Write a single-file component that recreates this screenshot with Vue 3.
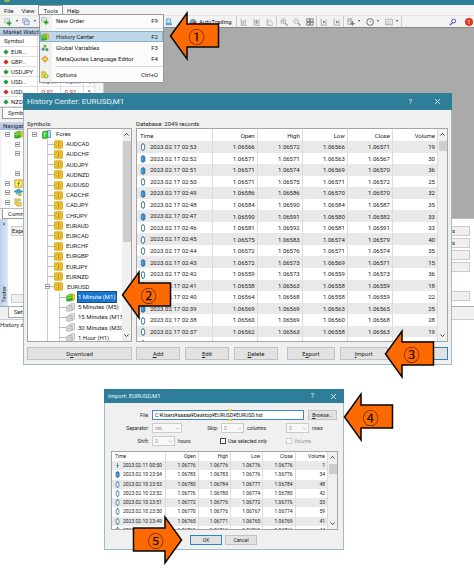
<script setup>
import { ref } from 'vue'

const menus = ['File', 'View', 'Tools', 'Help']
const tools = [
  { icon: 'add', label: 'New Order', key: 'F9', end: true },
  { icon: 'db', label: 'History Center', key: 'F2', active: true },
  { icon: 'dots', label: 'Global Variables', key: 'F3' },
  { icon: 'gem', label: 'MetaQuotes Language Editor', key: 'F4', end: true },
  { icon: 'gear', label: 'Options', key: 'Ctrl+O' }
]
const watch = [
  ['up', 'EUR...', '1.06...', '1.06...', '9'],
  ['down', 'GBP...', '1.19...', '1.19...', '12'],
  ['up', 'USDJPY', '134....', '134....', '10'],
  ['up', 'USD...', '1.34...', '1.34...', '4'],
  ['down', 'USD...', '0.92...', '0.92...', '5'],
  ['up', 'NZD...', '', '', '']
]
const navigator = [
  { icon: 'db', depth: 0, box: true },
  { depth: 1, box: true },
  { depth: 1, box: true },
  { depth: 1 },
  { depth: 1, box: true },
  { icon: 'fn', depth: 0, box: true },
  { icon: 'cap', depth: 0, box: true },
  { icon: 'script', depth: 0, box: true }
]
const symbols = ['AUDCAD', 'AUDCHF', 'AUDJPY', 'AUDNZD', 'AUDUSD', 'CADCHF', 'CADJPY', 'CHFJPY', 'EURAUD', 'EURCAD', 'EURCHF', 'EURGBP', 'EURJPY', 'EURNZD', 'EURUSD']
const frames = ['1 Minute (M1)', '5 Minutes (M5)', '15 Minutes (M15', '30 Minutes (M30', '1 Hour (H1)']
const tree = [
  { icon: 'forex', label: 'Forex', depth: 0, box: true },
  ...symbols.map(s => ({ icon: 'coin', label: s, depth: 1, box: s === 'EURUSD' })),
  ...frames.map((f, i) => ({ icon: i ? 'dbgray' : 'db', label: f, depth: 2, selected: i === 0 }))
]
const heads = ['Time', 'Open', 'High', 'Low', 'Close', 'Volume']
const records = [
  [0, '2023.02.17 02:53', '1.06566', '1.06572', '1.06566', '1.06571', 19],
  [1, '2023.02.17 02:52', '1.06571', '1.06571', '1.06563', '1.06567', 30],
  [1, '2023.02.17 02:51', '1.06571', '1.06574', '1.06569', '1.06570', 36],
  [0, '2023.02.17 02:50', '1.06571', '1.06575', '1.06571', '1.06572', 25],
  [1, '2023.02.17 02:49', '1.06586', '1.06586', '1.06570', '1.06570', 32],
  [0, '2023.02.17 02:48', '1.06584', '1.06590', '1.06584', '1.06587', 35],
  [1, '2023.02.17 02:47', '1.06590', '1.06591', '1.06580', '1.06582', 33],
  [0, '2023.02.17 02:46', '1.06581', '1.06592', '1.06581', '1.06591', 33],
  [0, '2023.02.17 02:45', '1.06575', '1.06583', '1.06574', '1.06579', 40],
  [0, '2023.02.17 02:44', '1.06572', '1.06576', '1.06571', '1.06574', 35],
  [1, '2023.02.17 02:43', '1.06572', '1.06573', '1.06569', '1.06571', 15],
  [0, '2023.02.17 02:42', '1.06559', '1.06573', '1.06559', '1.06573', 36],
  [0, '2023.02.17 02:41', '1.06558', '1.06563', '1.06558', '1.06559', 18],
  [1, '2023.02.17 02:40', '1.06564', '1.06568', '1.06558', '1.06559', 22],
  [1, '2023.02.17 02:39', '1.06569', '1.06569', '1.06563', '1.06565', 25],
  [0, '2023.02.17 02:38', '1.06560', '1.06569', '1.06560', '1.06568', 28],
  [0, '2023.02.17 02:37', '1.06562', '1.06563', '1.06558', '1.06563', 19],
  [0, '2023.02.17 02:36', '1.06561', '1.06565', '1.06560', '1.06562', 21]
]
const preview = [
  [2, '2023.02.11 00:50', '1.06776', '1.06776', '1.06776', '1.06776', 1],
  [1, '2023.02.10 23:54', '1.06783', '1.06783', '1.06776', '1.06776', 34],
  [0, '2023.02.10 23:53', '1.06780', '1.06784', '1.06777', '1.06784', 48],
  [0, '2023.02.10 23:52', '1.06776', '1.06780', '1.06774', '1.06780', 42],
  [0, '2023.02.10 23:51', '1.06772', '1.06776', '1.06772', '1.06776', 33],
  [0, '2023.02.10 23:50', '1.06770', '1.06776', '1.06767', '1.06774', 59],
  [0, '2023.02.10 23:49', '1.06765', '1.06771', '1.06765', '1.06769', 41],
  [0, '2023.02.10 23:48', '1.06761', '1.06766', '1.06761', '1.06766', 44]
]
const candles = ['candle', 'candlefull', 'candledash']
const actions = [
  ['', 'A', 'dd'], ['', 'E', 'dit'], ['', 'D', 'elete'], ['E', 'x', 'port'], ['', 'I', 'mport'], ['', '', '']
]
const path = ref('C:¥Users¥aaaaa¥Desktop¥EURUSD¥EURUSD.hst')
const steps = ['①', '②', '③', '④', '⑤']
</script>

<template>
  <div class="desktop">
    <svg class="defs" aria-hidden="true">
      <symbol id="add" viewBox="0 0 10 10"><path d="M1 1h6v5H1z" fill="#fff" stroke="#8a9a8a" stroke-width=".8" /><path d="M2 3h4M2 4.500h3" stroke="#9ab" stroke-width=".6" /><path d="M6.500 4v5.500M3.700 6.700h5.600" stroke="#23a52b" stroke-width="2" /></symbol>
      <symbol id="db" viewBox="0 0 10 10"><path d="M4 2l2-1.300 3.500.8v6L7 8.500z" fill="#f6cf1d" stroke="#a88400" stroke-width=".5" /><path d="M.8 3l2-1h4v6l-2 1h-4z" fill="#35b82c" stroke="#187c18" stroke-width=".6" /><path d="M.8 5.200h3.800L6.800 4M.8 3h4l2-1" stroke="#c9f25c" stroke-width=".8" fill="none" /></symbol>
      <symbol id="dbgray" viewBox="0 0 10 10"><path d="M3.500 2l2-1.300h4v6.500l-2.500 1z" fill="#e6e6e6" stroke="#999" stroke-width=".6" /><path d="M.8 4l2-1h4v5l-2 1h-4z" fill="#ddd" stroke="#888" stroke-width=".6" /><path d="M.8 6h3.800l2-1" stroke="#aaa" stroke-width=".6" fill="none" /></symbol>
      <symbol id="forex" viewBox="0 0 10 10"><path d="M5 2l1.500-1.300h3v7.500H5z" fill="#d5ecff" stroke="#2480c8" stroke-width=".8" /><path d="M.5 3l1-1.500h5V8l-1 1.300h-5z" fill="#2dcd35" stroke="#0b7d19" stroke-width=".7" /><path d="M2 3.500h3M3 3.500V8" stroke="#d9ffbd" stroke-width=".9" /></symbol>
      <symbol id="coin" viewBox="0 0 10 10"><rect x=".5" y=".8" width="9" height="8.400" rx="1" fill="#f5c51b" stroke="#c99a10" stroke-width=".8" /><circle cx="5" cy="5" r="2.700" fill="#ffe469" stroke="#b98600" stroke-width=".6" /><path d="M6 3.700H4.500v1.200h1.200v1.300H4M5 3v4" stroke="#a36e00" stroke-width=".6" fill="none" /></symbol>
      <symbol id="dots" viewBox="0 0 10 10"><circle cx="5" cy="2.700" r="1.800" fill="#57ba35" /><circle cx="2.700" cy="6.500" r="2" fill="#4c91d5" /><circle cx="7.400" cy="7" r="2" fill="#39a849" /><path d="M5 4v3" stroke="#e0b02b" /></symbol>
      <symbol id="gem" viewBox="0 0 10 10"><path d="M5 1l4 4-4 4-4-4z" fill="#f6c33c" stroke="#ba6b00" stroke-width=".8" /><path d="M1 5l4-1 4 1-4 2z" fill="#fff1a5" stroke="#c8811b" stroke-width=".5" /></symbol>
      <symbol id="gear" viewBox="0 0 10 10"><path d="M1 1h4l1 2v5H1z" fill="#f3d53e" stroke="#a48b0b" stroke-width=".6" /><circle cx="6.500" cy="6.500" r="2.300" fill="#b9dd43" stroke="#5f951a" stroke-width=".9" stroke-dasharray="1.200 .5" /><circle cx="6.500" cy="6.500" r=".8" fill="#fff" /></symbol>
      <symbol id="fn" viewBox="0 0 10 10"><rect x="1" y="1" width="8" height="8" fill="#fff06d" stroke="#c99a0f" /><path d="M6.500 2.500q-1.500 0-1.500 2V8M3.500 5h3" fill="none" stroke="#8b6500" stroke-width=".8" /></symbol>
      <symbol id="cap" viewBox="0 0 10 10"><path d="M0 4l5-3 5 3-5 2z" fill="#4aa0c9" stroke="#27627e" stroke-width=".5" /><path d="M2 5v2l4 2 2-1V5L5 6z" fill="#7ec7df" /><circle cx="7" cy="7.500" r="1.700" fill="#e1b33d" /></symbol>
      <symbol id="script" viewBox="0 0 10 10"><path d="M1 1h6v2H3v2h5v4H3V7H1z" fill="#f7d75d" stroke="#ae8515" stroke-width=".6" /></symbol>
      <symbol id="candle" viewBox="0 0 10 10"><path d="M5 0v1.500M5 8.500V10" stroke="#336f98" stroke-width="1.200" /><rect x="3" y="1.600" width="4" height="6.800" rx="1" fill="#fff" stroke="#336f98" stroke-width="1.100" /></symbol>
      <symbol id="candlefull" viewBox="0 0 10 10"><path d="M5 0v10" stroke="#206ba3" /><rect x="2.800" y="1.500" width="4.600" height="7" rx="1" fill="#2e87c6" stroke="#1c6197" stroke-width=".8" /><path d="M4.200 3v4" stroke="#a5d6f5" stroke-width=".8" /></symbol>
      <symbol id="candledash" viewBox="0 0 10 10"><path d="M5 1.500v7M3.500 5h3" stroke="#2b79b2" stroke-width="1.200" /></symbol>
      <symbol id="windows" viewBox="0 0 10 10"><path d="M1 1h6v5H1z" fill="#e9f1fa" stroke="#6788b0" stroke-width=".8" /><path d="M3 3.500h6v5H3z" fill="#d4e4f5" stroke="#6788b0" stroke-width=".8" /></symbol>
      <symbol id="tester" viewBox="0 0 10 10"><path d="M2 1h5v7H2z" fill="#c7e2f5" stroke="#3f87b8" stroke-width=".8" /><path d="M1 6h7l1 3H1z" fill="#5aa5d7" /></symbol>
      <symbol id="bars" viewBox="0 0 10 10"><path d="M1.500 1v8H9M4 3.500V8M6.500 2v6M3 5h1M6.500 3.500h1" fill="none" stroke="#888" stroke-width=".8" /></symbol>
      <symbol id="boxes" viewBox="0 0 10 10"><path d="M1.500 1v8H9M4.500 2v5.500M3.500 3.500h2v3h-2zM7.500 1.500v6" fill="none" stroke="#888" stroke-width=".8" /></symbol>
      <symbol id="line" viewBox="0 0 10 10"><path d="M1.500 1v8H9M2 6q2-5 4-2l3 3" fill="none" stroke="#888" stroke-width=".8" /></symbol>
      <symbol id="zoomin" viewBox="0 0 10 10"><path d="M6.500 6.500L9.500 9.500" stroke="#8f8a72" stroke-width="1.400" /><circle cx="4" cy="4" r="3" fill="#fff" stroke="#888" stroke-width=".8" /><path d="M2.500 4h3M4 2.500v3" stroke="#777" stroke-width=".8" /></symbol>
      <symbol id="zoomout" viewBox="0 0 10 10"><path d="M6.500 6.500L9.500 9.500" stroke="#8f8a72" stroke-width="1.400" /><circle cx="4" cy="4" r="3" fill="#fff" stroke="#999" stroke-width=".8" /><path d="M2.500 4h3" stroke="#777" stroke-width=".8" /></symbol>
      <symbol id="tiles" viewBox="0 0 10 10"><path d="M1 1h3.500v3.500H1zM5.500 1H9v3.500H5.500zM1 5.500h3.500V9H1zM5.500 5.500H9V9H5.500z" fill="#eee" stroke="#666" /></symbol>
      <symbol id="shift" viewBox="0 0 10 10"><path d="M1.500 1v8H9M7.500 2v6" fill="none" stroke="#888" stroke-width=".8" /><path d="M4 3l3 2-3 2z" fill="#777" /></symbol>
      <symbol id="indicator" viewBox="0 0 10 10"><path d="M1 1h5v7H1zM2.500 5V3M4.500 6V2" fill="#eee" stroke="#888" stroke-width=".8" /><path d="M7 4v5.500M4.500 7h5" stroke="#777" stroke-width="1.500" /></symbol>
      <symbol id="clock" viewBox="0 0 10 10"><circle cx="5" cy="5" r="4" fill="#fff" stroke="#777" stroke-width="1.300" /><path d="M5 2.500V5h2" fill="none" stroke="#777" stroke-width=".8" /></symbol>
      <symbol id="template" viewBox="0 0 10 10"><path d="M.5 1.500h9v7h-9z" fill="#eee" stroke="#999" stroke-width=".8" /><path d="M1.500 6l2-2 2 1L8 3M1.500 7.500H8" fill="none" stroke="#999" stroke-width=".7" /></symbol>
      <symbol id="search" viewBox="0 0 10 10"><path d="M4 6L1 9" stroke="#4444b8" stroke-width="1.500" /><circle cx="5.800" cy="3.800" r="2.400" fill="#fff" stroke="#4444b8" stroke-width="1.200" /></symbol>
      <symbol id="auto" viewBox="0 0 10 10"><path d="M1 4q4-5 8 0L8 8H2z" fill="#7ba7bd" stroke="#567" stroke-width=".6" /><circle cx="7" cy="7" r="2.500" fill="#d33" /></symbol>
      <symbol id="chev" viewBox="0 0 10 10"><path d="M2 3.500l3 3 3-3" fill="none" stroke="currentColor" stroke-width="1.400" /></symbol>
      <symbol id="cross" viewBox="0 0 10 10"><path d="M1.500 1.500l7 7M8.500 1.500l-7 7" stroke="currentColor" stroke-width="1.200" /></symbol>
    </svg>

    <main class="terminal">
      <div class="caption"><i class="logo"></i></div>
      <nav class="menubar">
        <button v-for="m in menus" :key="m" :class="{ open: m === 'Tools' }">{{ m }}</button>
      </nav>
      <div class="toolbar">
        <div class="group first">
          <svg><use href="#add" /></svg><b class="caret"></b><svg><use href="#windows" /></svg><b class="caret"></b>
        </div>
        <div class="group mid"><svg><use href="#tester" /></svg></div>
        <button class="auto"><svg><use href="#auto" /></svg>AutoTrading</button>
        <div class="group sep"><svg><use href="#bars" /></svg><svg><use href="#boxes" /></svg><svg><use href="#line" /></svg></div>
        <div class="group sep"><svg><use href="#zoomin" /></svg><svg><use href="#zoomout" /></svg><svg><use href="#tiles" /></svg></div>
        <div class="group sep"><svg><use href="#shift" /></svg><svg><use href="#shift" /></svg></div>
        <div class="group sep tight">
          <svg><use href="#indicator" /></svg><b class="caret"></b><svg><use href="#clock" /></svg><b class="caret"></b><svg><use href="#template" /></svg><b class="caret"></b>
        </div>
        <div class="group sep last"><svg><use href="#search" /></svg><span class="alert">1</span></div>
      </div>
      <div class="work">
        <aside class="side">
          <h2>Market Watch: 04:54</h2>
          <table class="watch">
            <thead><tr><th>Symbol</th><th></th><th></th><th></th></tr></thead>
            <tbody>
              <tr v-for="(r, i) in watch" :key="i" :class="r[0]">
                <td><i class="mark"></i>{{ r[1] }}</td><td>{{ r[2] }}</td><td>{{ r[3] }}</td><td>{{ r[4] }}</td>
              </tr>
            </tbody>
          </table>
          <div class="tabs"><button>Symbols</button></div>
          <h2>Navigator</h2>
          <ul class="nav">
            <li v-for="(n, i) in navigator" :key="i" :class="'d' + n.depth">
              <i v-if="n.box" class="box"></i><svg v-if="n.icon"><use :href="'#' + n.icon" /></svg>
            </li>
          </ul>
          <div class="tabs low"><button>Common</button></div>
        </aside>
        <div class="charts"></div>
      </div>
      <section class="testerpane">
        <div class="rail"><svg><use href="#cross" /></svg><span>Tester</span></div>
        <div class="form">
          <div class="col">
            <button>Expert</button><button class="low"></button>
          </div>
          <div class="col right">
            <button>properties</button><button>properties</button><button></button><button></button><button class="gap"></button>
          </div>
        </div>
      </section>
      <div class="settabs"><button>Settings</button></div>
      <footer class="status">History downloaded</footer>
    </main>

    <div class="popup" role="menu">
      <button v-for="t in tools" :key="t.label" role="menuitem" :class="{ active: t.active, end: t.end }">
        <svg><use :href="'#' + t.icon" /></svg><span>{{ t.label }}</span><kbd>{{ t.key }}</kbd>
      </button>
    </div>

    <section class="dialog history">
      <header>
        <h1>History Center: EURUSD,M1</h1>
        <button class="help" aria-label="Help">?</button>
        <button aria-label="Close"><svg><use href="#cross" /></svg></button>
      </header>
      <div class="panes">
        <div class="pane symbols">
          <p>Symbols:</p>
          <div class="frame">
            <ul class="tree">
              <li v-for="t in tree" :key="t.label" :class="['d' + t.depth, { selected: t.selected }]">
                <i v-if="t.box" class="box"></i><svg><use :href="'#' + t.icon" /></svg><span>{{ t.label }}</span>
              </li>
            </ul>
            <div class="scroll"><svg class="flip"><use href="#chev" /></svg><i class="long"></i><svg><use href="#chev" /></svg></div>
          </div>
        </div>
        <div class="pane data">
          <p>Database: 2049 records</p>
          <div class="frame">
            <div class="clip">
              <table class="bars">
                <thead><tr><th v-for="h in heads" :key="h">{{ h }}</th></tr></thead>
                <tbody>
                  <tr v-for="r in records" :key="r[1]">
                    <td><svg><use :href="'#' + candles[r[0]]" /></svg>{{ r[1] }}</td>
                    <td v-for="(c, i) in r.slice(2)" :key="i">{{ c }}</td>
                  </tr>
                </tbody>
              </table>
            </div>
            <div class="scroll"><svg class="flip"><use href="#chev" /></svg><i></i><svg><use href="#chev" /></svg></div>
          </div>
        </div>
      </div>
      <div class="actions">
        <button class="download">D<u>o</u>wnload</button>
        <div class="rest">
          <button v-for="a in actions" :key="a[1]" :class="a[1] || 'last'">{{ a[0] }}<u>{{ a[1] }}</u>{{ a[2] }}</button>
        </div>
      </div>
    </section>

    <section class="dialog import">
      <header>
        <h1>Import: EURUSD,M1</h1>
        <button class="help" aria-label="Help">?</button>
        <button aria-label="Close"><svg><use href="#cross" /></svg></button>
      </header>
      <form @submit.prevent>
        <label class="lead" for="file">File:</label>
        <div class="file"><input id="file" v-model="path" type="text"><button type="button"><u>B</u>rowse...</button></div>
        <label class="lead" for="separator">Separator:</label>
        <div class="line">
          <span class="pick wide"><select id="separator" disabled><option>tab</option></select><svg><use href="#chev" /></svg></span>
          <label class="skip" for="skip">Skip:</label>
          <span class="pick"><select id="skip" disabled><option>0</option></select><svg><use href="#chev" /></svg></span>
          <label class="unit" for="skip">columns</label>
          <span class="pick"><select id="rows" disabled><option>0</option></select><svg><use href="#chev" /></svg></span>
          <label for="rows">rows</label>
        </div>
        <label class="lead" for="shift-hours">Shift:</label>
        <div class="line">
          <span class="pick"><select id="shift-hours" disabled><option>0</option></select><svg><use href="#chev" /></svg></span>
          <label class="hours" for="shift-hours">hours</label>
          <label class="check"><input type="checkbox">Use selected only</label>
          <label class="check dim"><input type="checkbox" checked disabled>Volume</label>
        </div>
      </form>
      <div class="frame">
        <div class="clip">
          <table class="bars">
            <thead><tr><th v-for="h in heads" :key="h">{{ h }}</th></tr></thead>
            <tbody>
              <tr v-for="r in preview" :key="r[1]">
                <td><svg><use :href="'#' + candles[r[0]]" /></svg>{{ r[1] }}</td>
                <td v-for="(c, i) in r.slice(2)" :key="i">{{ c }}</td>
              </tr>
            </tbody>
          </table>
        </div>
        <div class="scroll"><svg class="flip"><use href="#chev" /></svg><i></i><svg><use href="#chev" /></svg></div>
      </div>
      <div class="confirm"><button class="primary">OK</button><button>Cancel</button></div>
      <svg class="spark" viewBox="0 0 8 12"><path d="M2 0l2 2 2-2M2 12l2-2 2 2" fill="none" stroke="#f2c62e" stroke-width="1.500" /></svg>
    </section>

    <div v-for="(s, i) in steps" :key="s" :class="['arrow', 'n' + (i + 1)]">
      <svg viewBox="0 0 51 52"><path d="M1.500 26L18 3v11h31.500v23H18v12z" fill="#ff6a00" stroke="#0a0500" stroke-width="1.500" /></svg>
      <span>{{ s }}</span>
    </div>
  </div>
</template>

<style>
body { margin: 0; background: #fff; }
</style>

<style scoped>
* { box-sizing: border-box; }
.desktop { position: relative; min-height: 100vh; overflow: hidden; font: 6px/10px Roboto, "Noto Sans", sans-serif; color: #222; }
.defs { position: absolute; width: 0; height: 0; }
h1, h2, p, ul { margin: 0; padding: 0; font-weight: 400; font-size: inherit; }
ul { list-style: none; }
button { font: inherit; color: inherit; padding: 0; border: 0; background: none; white-space: nowrap; }
svg { display: block; flex: none; width: 8px; height: 8px; }
table { border-collapse: collapse; table-layout: fixed; width: 100%; }
th, td { padding: 0; font-weight: 400; white-space: nowrap; overflow: hidden; }

.caption { height: 5px; background: #2e7e9a; padding-left: 4px; }
.logo { display: block; width: 6px; height: 2px; background: #9db84a; border-radius: 0 0 2px 2px; }
.menubar { display: flex; height: 10px; background: #f5f5f5; line-height: 9px; }
.menubar button { padding: 0 4px; }
.menubar .open { background: #fff; border: 1px solid #999; border-bottom: 0; line-height: 8px; }
.toolbar { display: flex; align-items: center; height: 13px; background: #f2f2f2; border-bottom: 1px solid #888; border-top: 1px solid #e4e4e4; }
.group { display: flex; align-items: center; gap: 4px; padding: 0 4px; height: 11px; }
.group.first { width: 165px; }
.group.mid { width: 24px; padding: 0; }
.auto { display: flex; align-items: center; gap: 2px; width: 47px; }
.group.sep { border-left: 1px solid #ccc; gap: 5px; padding: 0 2px 0 3px; }
.group.tight { gap: 3px; padding-right: 0; }
.group.tight .caret { margin-right: 3px; }
.group.last { flex: 1; justify-content: flex-end; gap: 8px; padding: 0 1px 0 4px; }
.caret { border: 1px solid transparent; border-top: 2px solid #444; width: 2px; height: 2px; }
.alert { width: 8px; height: 8px; border-radius: 4px; background: #d93a1f; color: #fff; text-align: center; font-size: 5px; line-height: 8px; }

.work { display: flex; height: 190px; }
.side { width: 104px; background: #f4f4f4; border-right: 1px solid #ccc; }
.charts { flex: 1; background: #aaa; }
.side h2 { height: 8px; line-height: 8px; padding-left: 3px; background: linear-gradient(#c7d6e8, #a7bcd6); color: #1d2b3d; }
.watch { background: #fff; width: 95px; line-height: 9px; }
.watch tr { height: 10px; border-bottom: 1px solid #e0e0e0; }
.watch th, .watch td { border-right: 1px solid #ddd; text-align: left; padding-left: 4px; }
.watch th:nth-child(1) { width: 37px; }
.watch th:nth-child(2), .watch th:nth-child(3) { width: 23px; }
.watch td:nth-child(n + 2) { color: #2540b5; }
.watch .down td:nth-child(n + 2) { color: #c52323; }
.mark { display: inline-block; width: 4px; height: 4px; margin-right: 3px; background: #2c9d43; border-radius: 1px; transform: rotate(45deg); }
.down .mark { background: #c53a2c; }
.tabs { height: 15px; border-top: 1px solid #bbb; padding-left: 2px; background: #f0f0f0; }
.tabs button { height: 11px; padding: 0 5px; background: #fff; border: 1px solid #999; border-top: 0; }
.tabs.low { height: 11px; }
.tabs.low button { height: 10px; line-height: 8px; }
.nav { height: 78px; display: flex; flex-direction: column; background: #fff; margin-left: 2px; }
.nav li { display: flex; align-items: center; gap: 4px; flex: 1; padding-left: 3px; }
.nav .d1 { padding-left: 13px; }
.nav svg { width: 9px; height: 9px; }
.box { flex: none; position: relative; z-index: 1; width: 5px; height: 5px; background: linear-gradient(#777, #777) center / 3px 1px no-repeat #fff; border: 1px solid #aaa; }

.testerpane { display: flex; height: 88px; border-top: 1px solid #bbb; background: #fff; }
.rail { width: 8px; display: flex; flex-direction: column; justify-content: space-between; align-items: center; background: linear-gradient(90deg, #b9d0ea, #dbe8f6); padding: 3px 0; }
.rail svg { width: 4px; height: 4px; color: #222; }
.rail span { writing-mode: vertical-rl; transform: rotate(180deg); line-height: 8px; }
.form { flex: 1; display: flex; justify-content: space-between; padding: 7px 4px 3px 3px; }
.col { width: 80px; display: flex; flex-direction: column; gap: 2px; }
.col button { height: 10px; background: #efefef; border: 1px solid #ccc; text-align: left; overflow: hidden; line-height: 8px; }
.col .low { margin-top: auto; height: 9px; }
.right button { text-align: right; padding-right: 14px; }
.col .gap { margin-top: 17px; }
.settabs { height: 14px; background: #f0f0f0; border-top: 1px solid #aaa; padding-left: 8px; border-bottom: 1px solid #ccc; }
.settabs button { height: 11px; background: #fff; border: 1px solid #aaa; border-top: 0; padding: 0 5px; }
.status { height: 10px; }

.popup { position: absolute; left: 39px; top: 14px; width: 125px; padding: 0 0 2px; background: linear-gradient(90deg, #f0f0f0 12px, #fcfcfc 12px); border: 1px solid #999; }
.popup button { display: flex; align-items: center; gap: 7px; width: 100%; height: 11px; padding: 0 5px 0 1px; text-align: left; }
.popup .end { margin-bottom: 5px; position: relative; }
.popup .end::after { content: ""; position: absolute; left: 15px; right: 0; bottom: -3px; border-top: 1px solid #ddd; }
.popup .active { background: #bdd7e9; box-shadow: inset 0 0 0 1px #8ab2cf; }
.popup span { flex: 1; }
kbd { font: inherit; }

.dialog { position: absolute; background: #f0f0f0; border: 1px solid #9cbcc8; }
.dialog header { display: flex; align-items: center; background: #2e7e9a; color: #e6f4f8; }
.dialog h1 { flex: 1; white-space: nowrap; }
.dialog header button { width: 27px; font-size: 7px; display: flex; justify-content: center; }
.dialog header svg { width: 7px; height: 7px; }
.history { left: 23px; right: 22px; top: 93px; padding-bottom: 4px; }
.history header { height: 17px; margin: -1px -1px 0; padding: 0 1px 0 4px; }
.history h1 { font-size: 8px; }
.panes { display: flex; gap: 4px; padding: 9px 3px 0; }
.symbols { width: 105px; }
.data { flex: 1; }
.pane p { height: 9px; line-height: 9px; }
.frame { display: flex; height: 214px; background: #fff; border: 1px solid #a5a5a5; overflow: hidden; }
.clip { flex: 1; overflow: hidden; }
.tree { flex: 1; height: 214px; display: flex; flex-direction: column; overflow: hidden; }
.tree li { position: relative; flex: 1; display: flex; align-items: center; gap: 3px; padding-left: 26px; white-space: nowrap; }
.tree svg { width: 9px; height: 9px; }
.tree .d0 { padding-left: 4px; gap: 5px; }
.tree .d1 { background: linear-gradient(#bbb, #bbb) 19px 50% / 7px 1px no-repeat, linear-gradient(#ccc, #ccc) 19px 0 / 1px 100% no-repeat; }
.tree .d1:has(.box) { padding-left: 17px; gap: 4px; }
.tree .d2 { padding-left: 38px; background: linear-gradient(#bbb, #bbb) 31px 50% / 7px 1px no-repeat, linear-gradient(#ccc, #ccc) 31px 0 / 1px 100% no-repeat, linear-gradient(#ccc, #ccc) 19px 0 / 1px 100% no-repeat; }
.tree .selected span { background: #1878cf; color: #fff; outline: 1px solid #184f80; }
.scroll { flex: none; width: 9px; background: #f0f0f0; display: flex; flex-direction: column; align-items: center; padding: 2px 0; color: #444; }
.scroll svg { width: 7px; height: 7px; }
.scroll .flip { transform: rotate(180deg); }
.scroll i { width: 8px; height: 10px; margin: 3px 0 auto; background: #cdcdcd; }
.scroll .long { height: 101px; }
.bars { height: 220px; line-height: 9px; }
.bars thead tr { height: 12px; }
.bars th, .bars td { text-align: right; padding-right: 2px; border-right: 1px solid #ddd; }
.bars th:first-child { width: 25%; text-align: left; padding-left: 3px; }
.bars td:first-child { text-align: left; padding-left: 2px; }
.bars tbody tr:nth-child(odd) { background: #e9e9e9; }
.bars td svg { display: inline-block; vertical-align: middle; margin-right: 3px; }
.actions { display: flex; gap: 4px; padding: 5px 3px 0; }
.actions button, .file button, .confirm button { background: #e2e2e2; border: 1px solid #c2c2c2; }
.actions button { height: 13px; line-height: 10px; }
.actions .download { width: 105px; }
.rest { flex: 1; display: flex; gap: 5px; }
.rest button { flex: 11; }
.rest .x, .rest .I { flex: 12; }
.rest .x { margin-left: 4px; }
.rest .last { flex: 14; border: 1px solid #2f83c5; }

.import { left: 104px; top: 389px; width: 240px; padding-bottom: 4px; font-size: 5px; line-height: 8px; }
.import header { height: 14px; margin: -1px -1px 0; padding: 0 0 0 4px; }
.import h1 { font-size: 6px; }
.import header button { width: 21px; }
.import form { display: grid; grid-template-columns: 40px minmax(0, 1fr); grid-auto-rows: 10px; gap: 3px; align-items: center; padding: 7px 6px 0 4px; }
.lead { text-align: right; }
.file { display: flex; gap: 4px; }
.file input { flex: 1; min-width: 0; height: 10px; padding: 0 2px; font: inherit; color: #111; background: #fff; border: 1px solid #3b8bc4; }
.file button { width: 29px; height: 10px; line-height: 8px; }
.line { display: flex; align-items: center; gap: 3px; white-space: nowrap; }
.pick { position: relative; flex: none; width: 23px; height: 10px; }
.pick.wide { width: 30px; }
.pick select { appearance: none; display: block; width: 100%; height: 10px; margin: 0; padding: 0 2px; font: inherit; line-height: 8px; color: #999; background: #f8f8f8; border: 1px solid #ccc; border-radius: 0; opacity: 1; }
.pick svg { position: absolute; right: 2px; top: 3px; width: 5px; height: 5px; color: #aaa; }
.skip { width: 33px; text-align: right; }
.unit { width: 36px; }
.hours { width: 39px; }
.check { display: flex; flex: none; align-items: center; gap: 2px; width: 63px; }
.check input { appearance: none; width: 6px; height: 6px; margin: 0; background: #fff; border: 1px solid #444; }
.check.dim { color: #999; width: auto; }
.dim input { border-color: #ccc; }
.import .frame { height: 79px; margin: 5px 5px 0 6px; }
.import .bars { height: 83px; line-height: 7px; }
.import .bars thead tr { height: 9px; }
.import .bars svg { width: 7px; height: 7px; margin-right: 2px; }
.confirm { display: flex; gap: 3px; padding: 5px 0 0 85px; }
.confirm button { width: 32px; height: 10px; line-height: 8px; }
.confirm .primary { border: 1px solid #2f83c5; }
.spark { position: absolute; left: 121px; top: 19px; width: 8px; height: 12px; }

.arrow { position: absolute; width: 51px; height: 52px; display: flex; align-items: center; justify-content: center; color: #140a00; font: 16px/20px "Noto Sans CJK JP", sans-serif; }
.arrow svg { position: absolute; left: 0; top: 0; width: 100%; height: 100%; }
.arrow span { position: relative; padding-left: 4px; }
.n1 { left: 169px; top: 10px; }
.n2 { left: 121px; top: 269px; }
.n3 { left: 384px; top: 328px; }
.n4 { left: 343px; top: 391px; }
.n5 { left: 132px; top: 514px; }
.n5 svg { transform: scaleX(-1); }
.n5 span { padding: 0 4px 0 0; }
</style>
